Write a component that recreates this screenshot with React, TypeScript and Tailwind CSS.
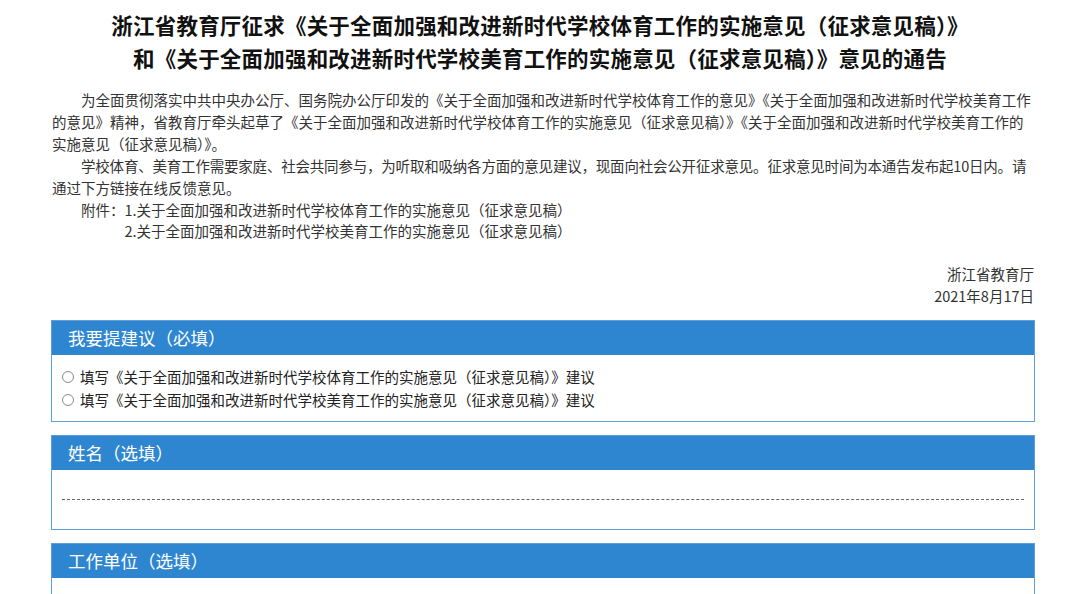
import React from 'react';

const font = { fontFamily: '"Noto Sans CJK SC", "Noto Sans", sans-serif' };

const Card = ({ title, children }: { title: string; children: React.ReactNode }) => (
  <div className="border border-[#5c9fdb] bg-white">
    <div className="h-[34px] bg-[#2f86d0] pl-[16px] flex items-center text-white text-[17.5px]">{title}</div>
    {children}
  </div>
);

const Radio = ({ label }: { label: string }) => (
  <label className="flex items-center h-[23px] text-[14.5px] text-[#222]">
    <span className="w-[12px] h-[12px] rounded-full border border-[#888] mr-[6px]" />
    {label}
  </label>
);

export default function App() {
  return (
    <div className="w-[1080px] h-[594px] overflow-hidden bg-white" style={font}>
      {/* Title */}
      <div className="pt-[8px] text-center font-bold text-[21.5px] leading-[33px] text-[#111] tracking-[0.2px]">
        <div>浙江省教育厅征求《关于全面加强和改进新时代学校体育工作的实施意见（征求意见稿）》</div>
        <div>和《关于全面加强和改进新时代学校美育工作的实施意见（征求意见稿）》意见的通告</div>
      </div>

      {/* Body */}
      <div className="pl-[52px] pr-[46px] pt-[15px] text-[14.5px] leading-[22px] text-[#333]">
        <p className="whitespace-nowrap">
          <span className="pl-[29px]">为全面贯彻落实中共中央办公厅、国务院办公厅印发的《关于全面加强和改进新时代学校体育工作的意见》《关于全面加强和改进新时代学校美育工作</span>
          <br />
          的意见》精神，省教育厅牵头起草了《关于全面加强和改进新时代学校体育工作的实施意见（征求意见稿）》《关于全面加强和改进新时代学校美育工作的
          <br />
          实施意见（征求意见稿）》。
        </p>
        <p className="whitespace-nowrap">
          <span className="pl-[29px] tracking-[-0.2px]">学校体育、美育工作需要家庭、社会共同参与，为听取和吸纳各方面的意见建议，现面向社会公开征求意见。征求意见时间为本通告发布起10日内。请</span>
          <br />
          通过下方链接在线反馈意见。
        </p>
        <div className="flex pl-[29px] leading-[21px]">
          <span>附件：</span>
          <div>
            <div>1.关于全面加强和改进新时代学校体育工作的实施意见（征求意见稿）</div>
            <div>2.关于全面加强和改进新时代学校美育工作的实施意见（征求意见稿）</div>
          </div>
        </div>

        <div className="mt-[22px] text-right leading-[22px]">
          <div>浙江省教育厅</div>
          <div>2021年8月17日</div>
        </div>
      </div>

      {/* Form */}
      <div className="mt-[13px] ml-[51px] w-[984px] flex flex-col gap-[13px]">
        <Card title="我要提建议（必填）">
          <div className="px-[10px] pt-[10px] pb-[10px]">
            <Radio label="填写《关于全面加强和改进新时代学校体育工作的实施意见（征求意见稿）》建议" />
            <Radio label="填写《关于全面加强和改进新时代学校美育工作的实施意见（征求意见稿）》建议" />
          </div>
        </Card>
        <Card title="姓名（选填）">
          <div className="h-[59px] px-[10px] flex items-center">
            <div className="w-full border-b border-dashed border-[#666]" />
          </div>
        </Card>
        <Card title="工作单位（选填）">
          <div className="h-[59px]" />
        </Card>
      </div>
    </div>
  );
}
